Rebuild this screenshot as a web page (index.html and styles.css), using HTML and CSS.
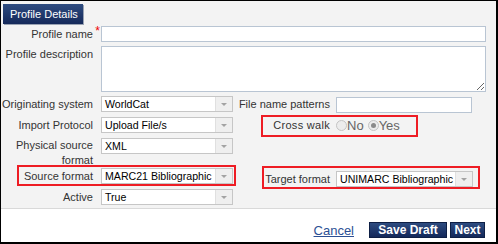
FILE: index.html
```html
<!DOCTYPE html>
<html lang="en">
<head>
  <meta charset="UTF-8" />
  <title>Profile Details</title>
  <link rel="stylesheet" href="styles.css">
</head>
<body>
  <div class="frame">
    <!-- Formulario -->
    <div class="panel">
      <div class="tab">Profile Details</div>

      <div class="row first">
        <label class="lbl">Profile name<span class="req">*</span></label>
        <input type="text" class="text name">
      </div>

      <div class="row top">
        <label class="lbl">Profile description</label>
        <textarea class="desc"></textarea>
      </div>

      <div class="row">
        <div class="field-l">
          <label class="lbl">Originating system</label>
          <div class="select"><span class="val">WorldCat</span><span class="arrow"></span></div>
        </div>
        <div class="field-r">
          <label class="lbl">File name patterns</label>
          <input type="text" class="text pattern">
        </div>
      </div>

      <div class="row gap5">
        <div class="field-l">
          <label class="lbl">Import Protocol</label>
          <div class="select"><span class="val">Upload File/s</span><span class="arrow"></span></div>
        </div>
        <div class="field-r hl hl-cross">
          <label class="lbl spaced">Cross walk</label>
          <div class="radios">
            <span class="radio"></span><span class="opt">No</span>
            <span class="radio checked"></span><span class="opt">Yes</span>
          </div>
        </div>
      </div>

      <div class="row gap5 top">
        <div class="field-l start">
          <label class="lbl two">Physical source format</label>
          <div class="select"><span class="val">XML</span><span class="arrow"></span></div>
        </div>
      </div>

      <div class="row top nogap">
        <div class="field-l hl hl-source">
          <label class="lbl">Source format</label>
          <div class="select"><span class="val">MARC21 Bibliographic</span><span class="arrow"></span></div>
        </div>
        <div class="field-r hl hl-target">
          <label class="lbl">Target format</label>
          <div class="select target"><span class="val">UNIMARC Bibliographic</span><span class="arrow"></span></div>
        </div>
      </div>

      <div class="row gap5">
        <div class="field-l">
          <label class="lbl">Active</label>
          <div class="select"><span class="val">True</span><span class="arrow"></span></div>
        </div>
      </div>
    </div>

    <!-- Botones -->
    <div class="footer">
      <a href="#" class="cancel">Cancel</a>
      <button class="btn save">Save Draft</button>
      <button class="btn next">Next</button>
    </div>
  </div>
</body>
</html>
```

FILE: styles.css
```css
body {
  margin: 0;
  padding: 0;
  background: #fff;
}
.frame {
  width: 495px;
  height: 241px;
  border: solid #000;
  border-width: 1px 2px 2px 1px;
  background: #fff;
  font-family: "Liberation Sans", Arial, sans-serif;
  font-size: 11px;
  color: #333;
}
.panel {
  background: #f3f3f3;
  border-bottom: 1px solid #d9d9d9;
  padding: 3px 0 3px 0;
}
.tab {
  width: 73px;
  height: 20px;
  margin-left: 2px;
  padding-left: 7px;
  line-height: 20px;
  color: #fff;
  background: linear-gradient(#2e4c80, #15295a);
  box-shadow: 1px 1px 0 #9aa3b3;
}
.row {
  display: flex;
  align-items: center;
  margin-top: 4px;
  height: 16px;
}
.row.first {
  margin-top: 2px;
}
.row.top {
  align-items: flex-start;
  height: auto;
}
.row.nogap {
  margin-top: 0;
  height: 16px;
}
.gap5 {
  margin-top: 5px;
}
.lbl {
  position: relative;
  width: 92px;
  margin-right: 8px;
  text-align: right;
  line-height: 16px;
  flex-shrink: 0;
}
.lbl.two {
  line-height: 15px;
  height: 30px;
}
.lbl.spaced {
  letter-spacing: 0.3px;
}
.req {
  position: absolute;
  right: -7px;
  top: -3px;
  color: #e00;
  font-size: 12px;
}
.text {
  box-sizing: border-box;
  height: 16px;
  margin: 0;
  padding: 0 3px;
  border: 1px solid #b9c5d3;
  background: #fff;
}
.name {
  width: 385px;
}
.desc {
  box-sizing: border-box;
  width: 385px;
  height: 46px;
  margin: 0;
  border: 1px solid #b9c5d3;
  background: #fff;
}
.field-l {
  display: flex;
  align-items: center;
  width: 232px;
}
.field-l.start {
  align-items: flex-start;
}
.field-r {
  display: flex;
  align-items: center;
  height: 16px;
}
.field-r .lbl {
  width: 97px;
  margin-right: 6px;
}
.pattern {
  width: 136px;
  margin-top: 1px;
}
.select {
  box-sizing: border-box;
  display: flex;
  width: 132px;
  height: 16px;
  border: 1px solid #c6c6c6;
  background: #fff;
  color: #000;
}
.select.target {
  width: 137px;
}
.val {
  flex: 1;
  padding-left: 3px;
  font-size: 10.6px;
  line-height: 14px;
  white-space: nowrap;
  overflow: hidden;
}
.arrow {
  width: 16px;
  background: #efefef;
  border-left: 1px solid #e0e0e0;
  display: flex;
  align-items: center;
  justify-content: center;
}
.arrow::before {
  content: "";
  border-left: 3px solid transparent;
  border-right: 3px solid transparent;
  border-top: 3px solid #a3a3a3;
}
.radios {
  display: flex;
  align-items: center;
}
.radio {
  box-sizing: border-box;
  width: 11px;
  height: 11px;
  border: 1px solid #c4c4c4;
  border-radius: 50%;
  background: #ececec;
  display: flex;
  align-items: center;
  justify-content: center;
}
.radio.checked::before {
  content: "";
  width: 5px;
  height: 5px;
  border-radius: 50%;
  background: #8a8a8a;
}
.opt {
  font-size: 13px;
  color: #666;
  margin-right: 4px;
}

/* Marcos rojos */
.hl {
  position: relative;
}
.hl::after {
  content: "";
  position: absolute;
  border: 2px solid #ee1c24;
  box-sizing: border-box;
}
.hl-cross::after {
  left: 28px;
  width: 157px;
  top: -2px;
  height: 22px;
}
.hl-source::after {
  left: 16px;
  right: -3px;
  top: -3px;
  bottom: -2px;
}
.hl-target {
  margin-top: 3px;
}
.hl-target::after {
  left: 29px;
  right: -7px;
  top: -5px;
  bottom: -2px;
}

.footer {
  display: flex;
  justify-content: flex-end;
  align-items: center;
  padding: 13px 11px 0 0;
}
.cancel {
  font-size: 13px;
  color: #2b4f94;
  margin-right: 12px;
}
.btn {
  box-sizing: border-box;
  height: 16px;
  margin: 0 0 0 3px;
  padding: 0;
  border: 1px solid #0e1f45;
  background: linear-gradient(#2d4b80, #13285a);
  color: #fff;
  font-family: "Liberation Sans", Arial, sans-serif;
  font-weight: bold;
  font-size: 12px;
  cursor: pointer;
}
.save {
  width: 78px;
}
.next {
  width: 35px;
}
```
